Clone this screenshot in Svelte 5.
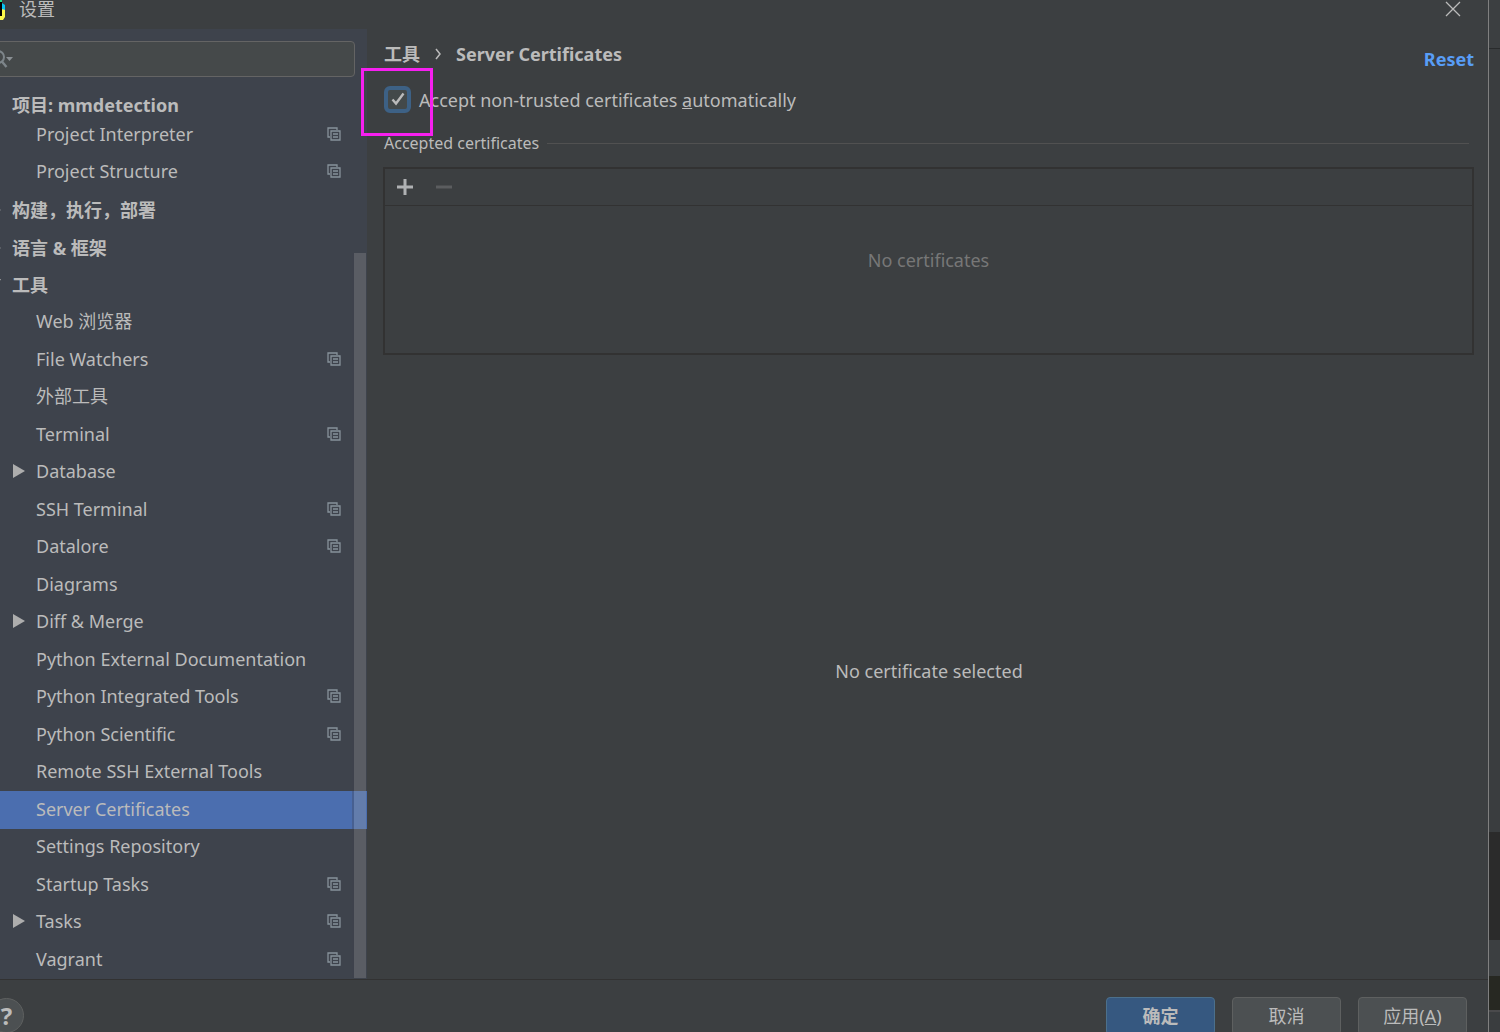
<script lang="ts">
  type Row = {
    label: string;
    group?: boolean;
    expandable?: boolean;
    open?: boolean;
    perProject?: boolean;
  };

  const rows: Row[] = [
    { label: "Project Interpreter", perProject: true },
    { label: "Project Structure", perProject: true },
    { label: "构建，执行，部署", group: true, expandable: true },
    { label: "语言 & 框架", group: true, expandable: true },
    { label: "工具", group: true, expandable: true, open: true },
    { label: "Web 浏览器" },
    { label: "File Watchers", perProject: true },
    { label: "外部工具" },
    { label: "Terminal", perProject: true },
    { label: "Database", expandable: true },
    { label: "SSH Terminal", perProject: true },
    { label: "Datalore", perProject: true },
    { label: "Diagrams" },
    { label: "Diff & Merge", expandable: true },
    { label: "Python External Documentation" },
    { label: "Python Integrated Tools", perProject: true },
    { label: "Python Scientific", perProject: true },
    { label: "Remote SSH External Tools" },
    { label: "Server Certificates" },
    { label: "Settings Repository" },
    { label: "Startup Tasks", perProject: true },
    { label: "Tasks", expandable: true, perProject: true },
    { label: "Vagrant", perProject: true },
  ];

  let selected = $state("Server Certificates");
  let accept = $state(true);
  let query = $state("");
</script>

<div class="screen">
  <div class="dialog">
    <header class="titlebar">
      <svg class="logo" width="6" height="20" viewBox="0 0 6 20">
        <path d="M0 0h2v3H0z" fill="#21d789" />
        <path d="M0 2h2v14H0z" fill="#000" />
        <path d="M2 3l3 2v7l-3-3z" fill="#07c3f2" />
        <path d="M2 9l3 1v7l-2 3H0v-4h2z" fill="#fcf84a" />
      </svg>
      <span class="title">设置</span>
      <button class="close" aria-label="关闭">
        <svg width="16" height="16" viewBox="0 0 16 16">
          <path d="M1 1l14 14M15 1L1 15" stroke="#bbb" stroke-width="1.3" />
        </svg>
      </button>
    </header>

    <div class="body">
      <aside>
        <div class="search">
          <svg width="20" height="20" viewBox="0 0 20 20">
            <circle cx="5" cy="8" r="6" fill="none" stroke="#7d858a" stroke-width="2" />
            <path d="M8.500 12l5 6" stroke="#7d858a" stroke-width="2.400" />
            <path d="M13 8h7l-3.500 4z" fill="#8a9094" />
          </svg>
          <input type="text" aria-label="搜索" bind:value={query} />
        </div>
        <div class="sticky">项目: mmdetection</div>
        <ul class="tree">
          {#each rows as row (row.label)}
            <li>
              <button
                class="row"
                class:group={row.group}
                class:selected={selected === row.label}
                onclick={() => (selected = row.label)}
              >
                <span class="arrow">
                  {#if row.expandable}
                    <svg width="13" height="14" viewBox="0 0 13 14">
                      {#if row.open}
                        <path d="M0 1h13L6.500 12z" fill="#adadad" />
                      {:else}
                        <path d="M1 0l12 7L1 14z" fill="#adadad" />
                      {/if}
                    </svg>
                  {/if}
                </span>
                <span class="label">{row.label}</span>
                {#if row.perProject}
                  <svg class="copy" width="14" height="14" viewBox="0 0 14 14">
                    <path
                      d="M3 10H1V1h9v2M4 4h9v9H4zM6 7h5M6 10h5"
                      fill="none"
                      stroke="#87929a"
                      stroke-width="1.300"
                    />
                  </svg>
                {/if}
              </button>
            </li>
          {/each}
        </ul>
        <div class="scrollbar"></div>
      </aside>

      <main>
        <div class="head">
          <h1>
            <span>工具</span>
            <svg width="6" height="12" viewBox="0 0 6 12">
              <path d="M1 1l4 5-4 5" fill="none" stroke="#bbb" stroke-width="1.500" />
            </svg>
            <span>Server Certificates</span>
          </h1>
          <a class="reset" href="#reset">Reset</a>
        </div>

        <div class="accept">
          <label>
            <span class="check">
              <input type="checkbox" bind:checked={accept} />
              {#if accept}
                <svg width="14" height="14" viewBox="0 0 14 14">
                  <path d="M1.500 7.500l3.500 4L12.500 1.500" fill="none" stroke="#bbb" stroke-width="2.400" />
                </svg>
              {/if}
            </span>
            <span>Accept non-trusted certificates <u>a</u>utomatically</span>
          </label>
          <div class="marker"></div>
        </div>

        <section>
          <h2>Accepted certificates</h2>
          <div class="panel">
            <div class="tools">
              <button aria-label="Add">
                <svg width="16" height="16" viewBox="0 0 16 16">
                  <path d="M8 0v16M0 8h16" stroke="#afb1b3" stroke-width="3" />
                </svg>
              </button>
              <button aria-label="Remove" disabled>
                <svg width="16" height="16" viewBox="0 0 16 16">
                  <path d="M0 8h16" stroke="#5b5d5f" stroke-width="3" />
                </svg>
              </button>
            </div>
            <p class="none">No certificates</p>
          </div>
        </section>

        <p class="detail">No certificate selected</p>
      </main>
    </div>

    <footer>
      <button class="help" aria-label="帮助">?</button>
      <div class="actions">
        <button class="primary">确定</button>
        <button>取消</button>
        <button>应用(<u>A</u>)</button>
      </div>
    </footer>
  </div>

  <div class="behind">
    <i class="top"></i>
    <i class="pane"></i>
    <i class="dark"></i>
    <i class="gap"></i>
    <i class="olive"></i>
    <i class="end"></i>
  </div>
</div>

<style>
  :global(body) {
    margin: 0;
    background: #3c3f41;
  }

  .screen {
    display: flex;
    height: 100vh;
    overflow: hidden;
    color: #bbbbbb;
    font: 18px/24px "Noto Sans", "Noto Sans CJK SC", sans-serif;
  }

  button {
    padding: 0;
    border: none;
    background: none;
    color: inherit;
    font: inherit;
  }

  svg {
    display: block;
    flex: none;
  }

  h1,
  h2,
  p,
  ul {
    margin: 0;
    padding: 0;
    font-weight: normal;
  }

  .dialog {
    flex: 1;
    min-width: 0;
    display: flex;
    flex-direction: column;
    background: #3c3f41;
    border-right: 1px solid #808080;
  }

  .titlebar {
    flex: none;
    height: 29px;
    display: flex;
    align-items: flex-start;
    gap: 13px;
  }

  .title {
    flex: 1;
    font-family: "Liberation Sans", "Noto Sans CJK SC", sans-serif;
    line-height: 21px;
  }

  .close {
    padding: 1px 27px 0 0;
  }

  .body {
    flex: 1;
    min-height: 0;
    display: flex;
  }

  aside {
    position: relative;
    flex: none;
    width: 367px;
    display: flex;
    flex-direction: column;
    overflow: hidden;
    background: #3e434c;
  }

  .search {
    flex: none;
    box-sizing: border-box;
    height: 36px;
    margin: 12px 12px 0 -8px;
    display: flex;
    align-items: center;
    border: 1px solid #646464;
    border-radius: 4px;
    background: #45494a;
  }

  .search input {
    flex: 1;
    min-width: 0;
    padding: 0 8px;
    border: none;
    outline: none;
    background: none;
    color: inherit;
    font: inherit;
  }

  .sticky {
    flex: none;
    height: 23px;
    padding: 16px 12px 0;
    font-weight: bold;
    white-space: nowrap;
  }

  .tree {
    flex: 1;
    min-height: 0;
    overflow: hidden;
    list-style: none;
  }

  /* rows average 37.5px, so the heights alternate */
  .row {
    width: 100%;
    height: 38px;
    padding: 0 26px 3px 12px;
    display: flex;
    align-items: center;
    text-align: left;
  }

  li:nth-child(even) .row {
    height: 37px;
  }

  .row.selected {
    background: #4b6eaf;
  }

  .row.group {
    padding-left: 0;
    padding-bottom: 0;
    font-weight: bold;
  }

  .arrow {
    flex: none;
    width: 24px;
  }

  .group .arrow {
    width: 12px;
  }

  .group .arrow svg {
    margin-left: -12px;
  }

  .label {
    flex: 1;
    white-space: nowrap;
  }

  .scrollbar {
    position: absolute;
    top: 224px;
    right: 1px;
    bottom: 1px;
    width: 12px;
    background: rgba(166, 166, 166, 0.27);
    box-shadow: -2px 0 rgba(62, 67, 76, 0.3);
  }

  main {
    flex: 1;
    min-width: 0;
    padding: 13px 14px 0 17px;
    display: flex;
    flex-direction: column;
  }

  .head {
    display: flex;
    justify-content: space-between;
    align-items: flex-start;
    font-weight: bold;
  }

  h1 {
    display: flex;
    align-items: center;
    gap: 15px;
    font-size: 18px;
    font-weight: bold;
  }

  .reset {
    padding-top: 5px;
    color: #589df6;
    text-decoration: none;
  }

  .accept {
    position: relative;
    padding-top: 15px;
  }

  label {
    display: flex;
    align-items: center;
    gap: 8px;
  }

  .check {
    position: relative;
    width: 27px;
    height: 27px;
  }

  .check input {
    appearance: none;
    box-sizing: border-box;
    display: block;
    width: 27px;
    height: 27px;
    margin: 0;
    border: 4px solid #3d6185;
    border-radius: 6px;
    background: #43494a;
  }

  .check svg {
    position: absolute;
    top: 6px;
    left: 7px;
    pointer-events: none;
  }

  .marker {
    position: absolute;
    top: -3px;
    left: -23px;
    box-sizing: border-box;
    width: 72px;
    height: 68px;
    border: 3px solid #f71ff0;
    pointer-events: none;
  }

  section {
    padding-top: 18px;
  }

  h2 {
    display: flex;
    align-items: center;
    gap: 8px;
    padding-right: 5px;
    font-size: 16px;
  }

  h2::after {
    content: "";
    flex: 1;
    height: 1px;
    background: #515151;
  }

  .panel {
    height: 184px;
    margin: 12px 0 0 -1px;
    border: 2px solid #323232;
  }

  .tools {
    height: 36px;
    padding-left: 12px;
    display: flex;
    align-items: center;
    gap: 23px;
    border-bottom: 1px solid #323232;
  }

  .none {
    padding-top: 42px;
    color: #777777;
    text-align: center;
  }

  .detail {
    flex: 1;
    padding-top: 8px;
    display: flex;
    align-items: center;
    justify-content: center;
  }

  footer {
    flex: none;
    height: 52px;
    display: flex;
    justify-content: space-between;
    align-items: flex-start;
    border-top: 1px solid #323232;
  }

  .help {
    box-sizing: border-box;
    width: 35px;
    height: 35px;
    margin: 18px 0 0 -11px;
    border: 1px solid #5e6060;
    border-radius: 50%;
    background: #4c5052;
    font-size: 24px;
    font-weight: bold;
  }

  .actions {
    display: flex;
    gap: 17px;
    padding: 17px 21px 0 0;
  }

  .actions button {
    box-sizing: border-box;
    width: 109px;
    height: 38px;
    border: 1px solid #5e6060;
    border-radius: 4px;
    background: #4c5052;
  }

  .actions .primary {
    border-color: #4c708c;
    background: #365880;
    font-weight: bold;
  }

  .behind {
    flex: none;
    width: 11px;
    display: flex;
    flex-direction: column;
  }

  .top {
    height: 48px;
    border-bottom: 1px solid #292b2c;
  }

  .pane {
    flex: 1;
    background: #3a3d3f;
  }

  .dark {
    height: 108px;
    background: #2b2b2b;
  }

  .gap {
    height: 36px;
    background: #3c3f41;
  }

  .olive {
    height: 34px;
    background: #272822;
  }

  .end {
    height: 20px;
    border-top: 2px solid #4a4a4c;
    background: #3a3d3f;
  }
</style>
